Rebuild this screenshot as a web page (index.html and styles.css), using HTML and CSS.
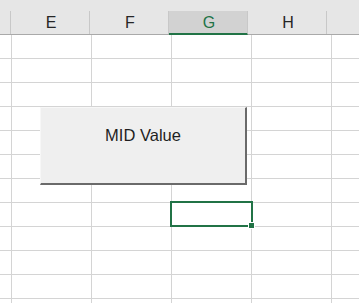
FILE: index.html
```html
<!DOCTYPE html>
<html>
<head>
<meta charset="utf-8">
<link rel="stylesheet" href="styles.css">
</head>
<body>
<div class="sheet">
  <div class="topbar"></div>
  <div class="colhead">
    <div class="hc c0"></div>
    <div class="hc">E</div>
    <div class="hc">F</div>
    <div class="hc sel">G</div>
    <div class="hc">H</div>
    <div class="hc clast"></div>
  </div>
  <div class="grid">
    <div class="row"><div class="c c0"></div><div class="c"></div><div class="c"></div><div class="c"></div><div class="c"></div><div class="c clast"></div></div>
    <div class="row"><div class="c c0"></div><div class="c"></div><div class="c"></div><div class="c"></div><div class="c"></div><div class="c clast"></div></div>
    <div class="row"><div class="c c0"></div><div class="c"></div><div class="c"></div><div class="c"></div><div class="c"></div><div class="c clast"></div></div>
    <div class="row"><div class="c c0"></div><div class="c"></div><div class="c"></div><div class="c"></div><div class="c"></div><div class="c clast"></div></div>
    <div class="row"><div class="c c0"></div><div class="c"></div><div class="c"></div><div class="c"></div><div class="c"></div><div class="c clast"></div></div>
    <div class="row"><div class="c c0"></div><div class="c"></div><div class="c"></div><div class="c"></div><div class="c"></div><div class="c clast"></div></div>
    <div class="row"><div class="c c0"></div><div class="c"></div><div class="c"></div><div class="c"></div><div class="c"></div><div class="c clast"></div></div>
    <div class="row"><div class="c c0"></div><div class="c"></div><div class="c"></div><div class="c"></div><div class="c"></div><div class="c clast"></div></div>
    <div class="row"><div class="c c0"></div><div class="c"></div><div class="c"></div><div class="c"></div><div class="c"></div><div class="c clast"></div></div>
    <div class="row"><div class="c c0"></div><div class="c"></div><div class="c"></div><div class="c"></div><div class="c"></div><div class="c clast"></div></div>
    <div class="row"><div class="c c0"></div><div class="c"></div><div class="c"></div><div class="c"></div><div class="c"></div><div class="c clast"></div></div>
    <div class="row"><div class="c c0"></div><div class="c"></div><div class="c"></div><div class="c"></div><div class="c"></div><div class="c clast"></div></div>
  </div>
  <div class="btn">MID Value</div>
  <div class="selbox"><div class="handle"></div></div>
</div>
</body>
</html>
```
FILE: styles.css
```css
html, body {
  margin: 0;
  padding: 0;
  background: #ffffff;
  overflow: hidden;
}
.sheet {
  position: relative;
  width: 359px;
  height: 303px;
  overflow: hidden;
  font-family: "Liberation Sans", Arial, sans-serif;
}
.topbar {
  height: 11px;
  background: #e6e6e6;
}
.colhead {
  display: flex;
  height: 23px;
  background: #e6e6e6;
  border-bottom: 1px solid #a9a9a9;
}
.hc {
  flex: 0 0 79px;
  border-right: 1px solid #c8c8c8;
  display: flex;
  align-items: center;
  justify-content: center;
  font-size: 16px;
  color: #262626;
  padding-top: 1px;
  padding-left: 2px;
  box-sizing: border-box;
}
.hc.c0 { flex-basis: 11px; }
.hc.clast { flex: 1 1 auto; border-right: none; }
.hc.sel {
  background: #d2d2d2;
  color: #217346;
  border-bottom: 2px solid #217346;
  margin-bottom: -1px;
}
.row {
  display: flex;
  height: 23px;
  border-bottom: 1px solid #d4d4d4;
}
.c {
  flex: 0 0 79px;
  border-right: 1px solid #d4d4d4;
}
.c.c0 { flex-basis: 11px; }
.c.clast { flex: 1 1 auto; border-right: none; }
.btn {
  position: absolute;
  left: 40px;
  top: 107px;
  width: 207px;
  height: 78px;
  box-sizing: border-box;
  background: #efefef;
  border-top: 1px solid #f7f7f7;
  border-left: 1px solid #f7f7f7;
  border-right: 2px solid #6a6a6a;
  border-bottom: 2px solid #6a6a6a;
  text-align: center;
  font-size: 16.5px;
  color: #1f1f1f;
  padding-top: 18px;
  line-height: 18px;
}
.selbox {
  position: absolute;
  left: 170px;
  top: 201px;
  width: 83px;
  height: 26px;
  box-sizing: border-box;
  border: 2px solid #217346;
}
.handle {
  position: absolute;
  right: -4px;
  bottom: -4px;
  width: 5px;
  height: 5px;
  background: #217346;
  border: 1px solid #ffffff;
}
```
